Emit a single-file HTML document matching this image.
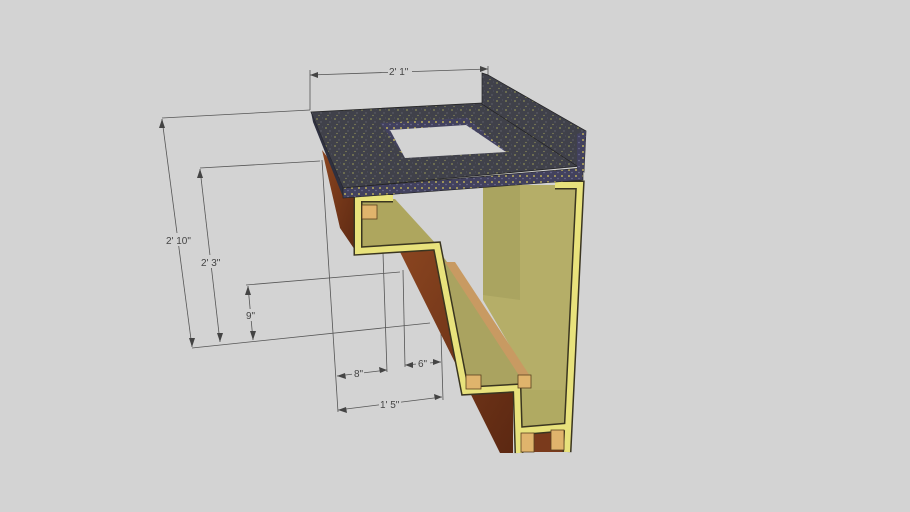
<!DOCTYPE html>
<html><head><meta charset="utf-8"><style>
html,body{margin:0;padding:0;background:#d3d3d3;}
svg{display:block}
text{font-family:"Liberation Sans",sans-serif;font-size:10px;fill:#444}
</style></head><body>
<svg width="910" height="512" viewBox="0 0 910 512" xmlns="http://www.w3.org/2000/svg">
<defs>
<pattern id="gr" width="9" height="9" patternUnits="userSpaceOnUse">
<rect width="9" height="9" fill="#40414a"/>
<circle cx="2" cy="2" r="0.9" fill="#8a8a55"/>
<circle cx="6" cy="5" r="0.7" fill="#62646e"/>
<circle cx="4" cy="7.5" r="0.6" fill="#9c9a5c"/>
<circle cx="7.5" cy="1" r="0.5" fill="#55576a"/>
</pattern>
<pattern id="gr2" width="7" height="6" patternUnits="userSpaceOnUse">
<rect width="7" height="6" fill="#42415e"/>
<circle cx="2" cy="2" r="1" fill="#b8ac5a"/>
<circle cx="5" cy="4.5" r="0.8" fill="#6e6e90"/>
</pattern>
<linearGradient id="br" x1="0" y1="0" x2="1" y2="1">
<stop offset="0" stop-color="#8a4520"/><stop offset="1" stop-color="#5c2812"/>
</linearGradient>
</defs>
<rect width="910" height="512" fill="#d3d3d3"/>

<g stroke="#555" stroke-width="0.8" fill="none">
<line x1="162" y1="118" x2="310" y2="110"/>
<line x1="200" y1="168" x2="320" y2="161"/>
<line x1="246" y1="285" x2="400" y2="272"/>
<line x1="192" y1="348" x2="430" y2="323"/>
<line x1="162" y1="119" x2="192" y2="347"/>
<line x1="200" y1="169" x2="220" y2="342"/>
<line x1="248" y1="286" x2="253" y2="340"/>
<line x1="322" y1="160" x2="338" y2="412"/>
<line x1="383" y1="253" x2="387" y2="372"/>
<line x1="403" y1="270" x2="405" y2="367"/>
<line x1="440" y1="300" x2="443" y2="400"/>
<line x1="337" y1="376" x2="387" y2="370"/>
<line x1="405" y1="365" x2="441" y2="362"/>
<line x1="338" y1="410" x2="442" y2="397"/>
<line x1="310" y1="75" x2="488" y2="69"/>
<line x1="310" y1="70" x2="310" y2="110"/>
<line x1="488" y1="66" x2="488" y2="76"/>
</g>
<g fill="#d3d3d3">
<rect x="166" y="233" width="24" height="13"/>
<rect x="200" y="255" width="22" height="13"/>
<rect x="244" y="309" width="14" height="12"/>
<rect x="352" y="367" width="12" height="11"/>
<rect x="416" y="358" width="14" height="11"/>
<rect x="379" y="398" width="22" height="11"/>
<rect x="388" y="66" width="24" height="11"/>
</g>
<g fill="#444">
<path d="M162 119 l-3 9 l6 0z"/><path d="M192 347 l-3 -9 l6 0z"/>
<path d="M200 169 l-3 9 l6 0z"/><path d="M220 342 l-3 -9 l6 0z"/>
<path d="M248 286 l-3 9 l6 0z"/><path d="M253 340 l-3 -9 l6 0z"/>
<path d="M337 376 l8 -3 l1 6z"/><path d="M387 370 l-8 -3 l1 6z"/>
<path d="M405 365 l8 -3 l0 6z"/><path d="M441 362 l-8 -3 l0 6z"/>
<path d="M338 410 l8 -3 l1 6z"/><path d="M442 397 l-8 -3 l1 6z"/>
<path d="M310 75 l8 -3 l0 6z"/><path d="M488 69 l-8 -3 l0 6z"/>
</g>
<text x="166" y="244">2' 10"</text>
<text x="201" y="266">2' 3"</text>
<text x="246" y="319">9"</text>
<text x="354" y="377">8"</text>
<text x="418" y="367">6"</text>
<text x="380" y="408">1' 5"</text>
<text x="389" y="75">2' 1"</text>

<!-- olive back panel -->
<polygon points="483,185 580,185 568,452 520,452 520,388 530,380 483,300" fill="#b5ae68"/>
<polygon points="483,185 520,185 520,300 483,295" fill="#aaa460"/>
<!-- brown faces -->
<polygon points="322,150 357,197 357,253 340,228" fill="url(#br)"/>
<polygon points="400,252 436,248 464,392 480,392 513,390 513,453 500,453" fill="url(#br)"/>
<polygon points="520,430 567,426 568,452 520,452" fill="#7a3a1c"/>
<!-- upper shelf -->
<polygon points="358,200 395,199 437,245 358,250" fill="#aea65e"/>
<!-- lower diagonal shelf -->
<polygon points="437,248 447,262 530,378 517,388 465,391" fill="#aaa360"/>
<polygon points="445,262 455,262 530,376 522,380" fill="#c89a62"/>
<polygon points="520,390 567,390 567,428 520,432" fill="#b0aa62"/>
<g fill="none" stroke-linejoin="miter">
<path d="M393,198 L358,198 L358,251 L437,246 L465,391 L517,388 L519,453 M519,431 L567,427 M555,185 L580,185 L567,452" stroke="#3a3520" stroke-width="9"/>
<path d="M393,198 L358,198 L358,251 L437,246 L465,391 L517,388 L519,453 M519,431 L567,427 M555,185 L580,185 L567,452" stroke="#e8e27c" stroke-width="6"/>
</g>
<g fill="#e0b46c" stroke="#5a4020" stroke-width="0.8">
<rect x="362" y="205" width="15" height="14"/>
<rect x="466" y="375" width="15" height="14"/>
<rect x="518" y="375" width="13" height="13"/>
<rect x="521" y="433" width="13" height="19"/>
<rect x="551" y="430" width="13" height="20"/>
</g>

<!-- countertop -->
<polygon points="311,112 482,103 582,166 343,188" fill="url(#gr)" stroke="#222" stroke-width="0.8"/>
<polygon points="311,112 343,188 343,197 313,122" fill="#2e3040"/>
<polygon points="343,188 583,168 583,180 343,198" fill="url(#gr2)" stroke="#222" stroke-width="0.6"/>
<polygon points="380,123 467,118 507,152 405,158" fill="url(#gr2)"/>
<polygon points="390,130 466,125 506,152 405,158" fill="#d3d3d3"/>
<!-- backsplash -->
<polygon points="482,73 488,75 586,131 584,172 577,166 482,104" fill="url(#gr)" stroke="#222" stroke-width="0.7"/>
<polygon points="577,134 586,131 584,172 577,168" fill="url(#gr2)"/>
</svg>
</body></html>
